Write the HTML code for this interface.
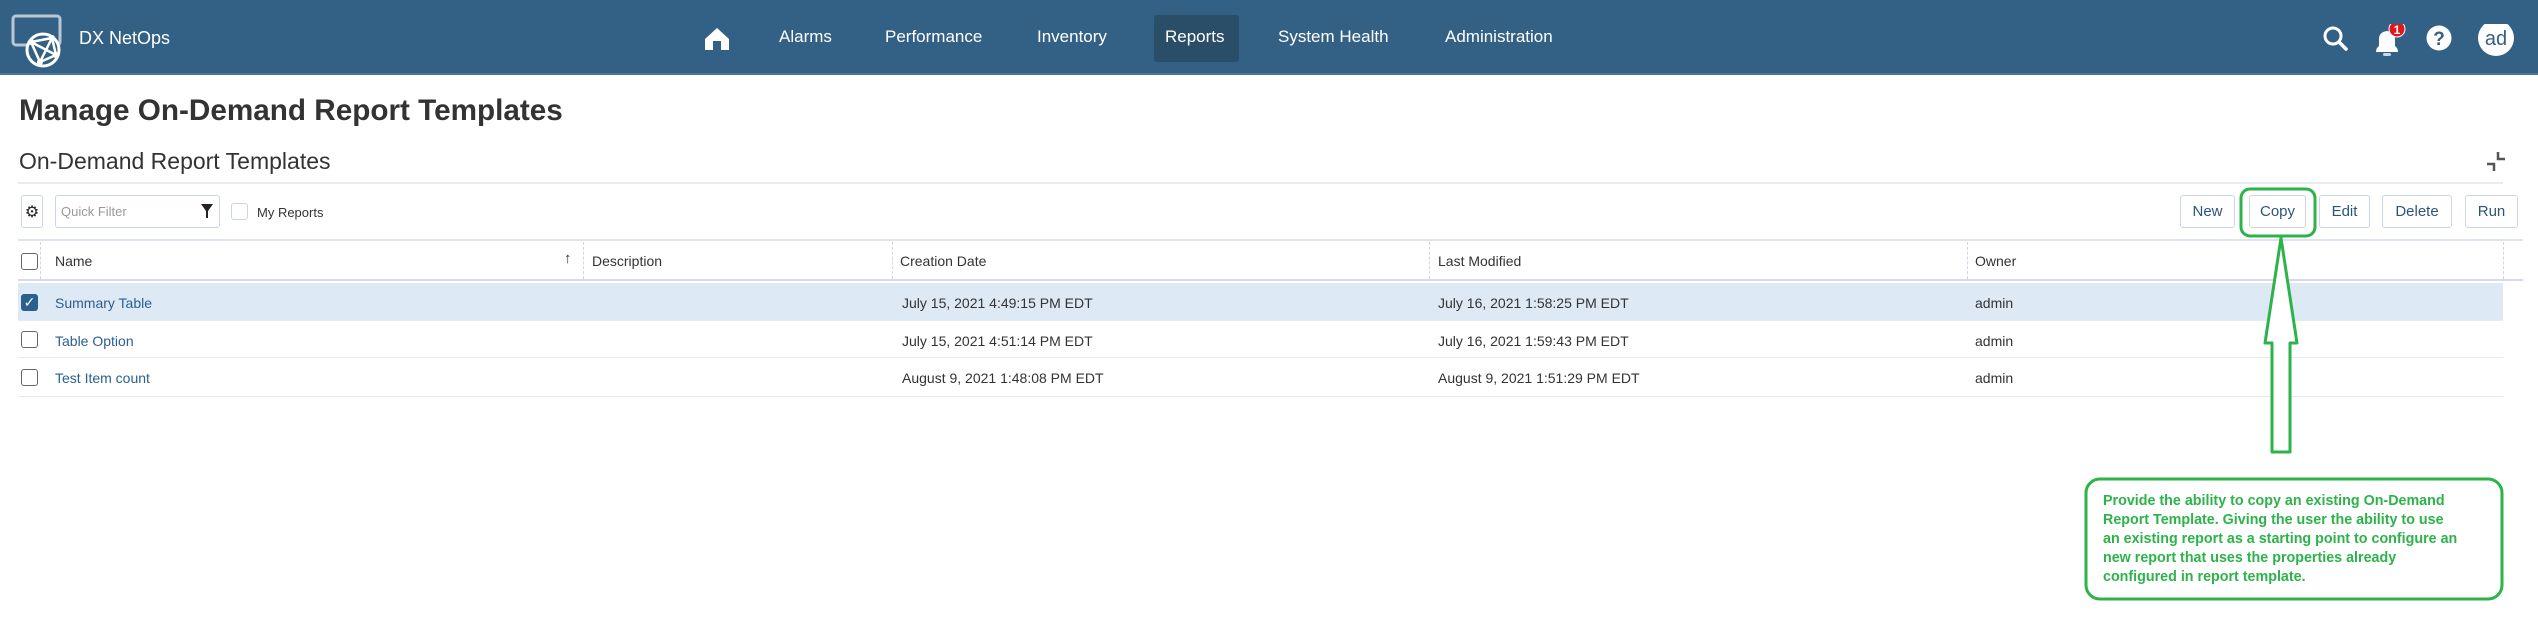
<!DOCTYPE html>
<html><head><meta charset="utf-8"><style>
*{margin:0;padding:0;box-sizing:border-box}
body{width:2538px;height:627px;background:#fff;position:relative;overflow:hidden;font-family:"Liberation Sans",sans-serif;color:#333}
.a{position:absolute;white-space:nowrap}
.nav{left:0;top:0;width:2538px;height:75px;background:#336185;border-bottom:2px solid #4a7594}
.nl{color:#fff;font-size:17px;top:27px}
.btn{position:absolute;top:195px;height:33px;border:1px solid #ccd5e2;border-radius:3px;background:#fff;color:#2c5678;font-size:15px;text-align:center;line-height:31px}
.cb{position:absolute;width:17px;height:17px;border:1.5px solid #666;border-radius:3px;background:#fff}
.t{font-size:14px;color:#333}
.lk{font-size:14px;color:#2b5f8e}
.sep{position:absolute;top:242px;height:37px;border-left:1px dashed #cfd6e4}
.hl{position:absolute;left:18px;width:2485px;height:1px;background:#e6e9ee}
</style></head><body>
<div class="a nav"></div>
<svg class="a" style="left:0;top:0" width="200" height="75">
<rect x="13" y="16" width="47" height="29" rx="3" fill="none" stroke="#b9c6d3" stroke-width="3"/>
<circle cx="43" cy="50" r="16" fill="#336185" stroke="#fff" stroke-width="3"/>
<path d="M31 42 L52 38 L56 55 L40 62 Z M31 42 L56 55 M52 38 L40 62" stroke="#fff" stroke-width="2.5" fill="none"/>
<circle cx="31" cy="42" r="3" fill="#fff"/><circle cx="52" cy="38" r="3" fill="#fff"/><circle cx="56" cy="55" r="3" fill="#fff"/><circle cx="40" cy="62" r="3" fill="#fff"/>
</svg>
<div class="a" style="left:79px;top:28px;color:#fff;font-size:18px">DX NetOps</div>
<svg class="a" style="left:704px;top:27px" width="26" height="24"><path d="M13 1 L25 12 V23 H17 V14 H9 V23 H1 V12 Z" fill="#fff"/></svg>
<div class="a nl" style="left:779px">Alarms</div>
<div class="a nl" style="left:885px">Performance</div>
<div class="a nl" style="left:1037px">Inventory</div>
<div class="a" style="left:1154px;top:15px;width:85px;height:47px;background:#2a4e68;border-radius:3px"></div>
<div class="a nl" style="left:1165px">Reports</div>
<div class="a nl" style="left:1278px">System Health</div>
<div class="a nl" style="left:1445px">Administration</div>
<svg class="a" style="left:2320px;top:24px" width="200" height="34">
<circle cx="13" cy="12" r="8" fill="none" stroke="#fff" stroke-width="3"/><path d="M19 18 L26 25" stroke="#fff" stroke-width="3.5" stroke-linecap="round"/>
<path d="M56 28 Q56 24 59 22 V15 Q59 8 67 7 Q75 8 75 15 V22 Q78 24 78 28 Z" fill="#fff"/><rect x="63" y="29" width="8" height="3" rx="1.5" fill="#cfd8e2"/>
<circle cx="77" cy="5" r="8" fill="#e0181e" stroke="#fff" stroke-width="1"/><text x="77" y="10" font-size="12" font-weight="bold" fill="#fff" text-anchor="middle" font-family="Liberation Sans">1</text>
<circle cx="119" cy="14" r="12.5" fill="#fff"/><text x="119" y="21" font-size="19" font-weight="bold" fill="#336185" text-anchor="middle" font-family="Liberation Sans">?</text>
<circle cx="176" cy="14" r="18" fill="#fff"/><text x="176" y="21" font-size="20" fill="#336185" text-anchor="middle" font-family="Liberation Sans">ad</text>
</svg>
<div class="a" style="left:19px;top:94px;font-size:29.7px;font-weight:bold;color:#333">Manage On-Demand Report Templates</div>
<div class="a" style="left:19px;top:148px;font-size:23px;color:#333">On-Demand Report Templates</div>
<svg class="a" style="left:2485px;top:150px" width="22" height="22"><path d="M2 14 H9 V21 M13 2 V9 H20" stroke="#555" stroke-width="2.5" fill="none"/></svg>
<div class="hl" style="top:182px;height:2px;background:#e8ebf0"></div>
<div class="a" style="left:21px;top:195px;width:22px;height:33px;border:1px solid #ccd5e2;border-radius:3px;text-align:center;line-height:31px;font-size:16px;color:#222;font-family:'DejaVu Sans',sans-serif">⚙</div>
<div class="a" style="left:55px;top:195px;width:165px;height:33px;border:1px solid #ccd5e2;border-radius:3px"></div>
<div class="a" style="left:61px;top:204px;font-size:13px;color:#999">Quick Filter</div>
<svg class="a" style="left:200px;top:203px" width="14" height="16"><path d="M1 1 H13 L8 8 V15 L6 15 V8 Z" fill="#222"/></svg>
<div class="a" style="left:231px;top:203px;width:17px;height:17px;border:1px solid #ccd5e2;border-radius:3px"></div>
<div class="a" style="left:257px;top:205px;font-size:13px;color:#333">My Reports</div>
<div class="btn" style="left:2180px;width:55px">New</div>
<div class="btn" style="left:2249px;width:57px">Copy</div>
<div class="btn" style="left:2319px;width:51px">Edit</div>
<div class="btn" style="left:2382px;width:70px">Delete</div>
<div class="btn" style="left:2465px;width:53px">Run</div>
<div class="hl" style="top:239px;width:2505px;height:2px;background:#dfe3ec"></div>
<div class="cb" style="left:21px;top:253px"></div>
<div class="a t" style="left:55px;top:253px">Name</div>
<div class="a t" style="left:564px;top:250px;font-size:15px">↑</div>
<div class="sep" style="left:40px"></div>
<div class="sep" style="left:583px"></div>
<div class="a t" style="left:592px;top:253px">Description</div>
<div class="sep" style="left:892px"></div>
<div class="a t" style="left:900px;top:253px">Creation Date</div>
<div class="sep" style="left:1429px"></div>
<div class="a t" style="left:1438px;top:253px">Last Modified</div>
<div class="sep" style="left:1967px"></div>
<div class="a t" style="left:1975px;top:253px">Owner</div>
<div class="sep" style="left:2503px"></div>
<div class="hl" style="top:279px;width:2505px;height:2px;background:#d5dbe8"></div>
<div class="a" style="left:18px;top:283px;width:2485px;height:37px;background:#dde9f5"></div>
<div class="a" style="left:21px;top:294px;width:17px;height:17px;border-radius:3px;background:#2b5f8e;color:#fff;font-size:14px;line-height:17px;text-align:center">✓</div>
<div class="a lk" style="left:55px;top:295px">Summary Table</div>
<div class="a t" style="left:902px;top:295px">July 15, 2021 4:49:15 PM EDT</div>
<div class="a t" style="left:1438px;top:295px">July 16, 2021 1:58:25 PM EDT</div>
<div class="a t" style="left:1975px;top:295px">admin</div>
<div class="hl" style="top:320px"></div>
<div class="cb" style="left:21px;top:331px"></div>
<div class="a lk" style="left:55px;top:333px">Table Option</div>
<div class="a t" style="left:902px;top:333px">July 15, 2021 4:51:14 PM EDT</div>
<div class="a t" style="left:1438px;top:333px">July 16, 2021 1:59:43 PM EDT</div>
<div class="a t" style="left:1975px;top:333px">admin</div>
<div class="hl" style="top:357px"></div>
<div class="cb" style="left:21px;top:369px"></div>
<div class="a lk" style="left:55px;top:370px">Test Item count</div>
<div class="a t" style="left:902px;top:370px">August 9, 2021 1:48:08 PM EDT</div>
<div class="a t" style="left:1438px;top:370px">August 9, 2021 1:51:29 PM EDT</div>
<div class="a t" style="left:1975px;top:370px">admin</div>
<div class="hl" style="top:396px"></div>
<svg class="a" style="left:0;top:0" width="2538" height="627">
<rect x="2241" y="189" width="74" height="47" rx="9" fill="none" stroke="#2db34a" stroke-width="3"/>
<path d="M2281 238 L2297 343 L2290 343 L2290 452 L2272 452 L2272 343 L2265 343 Z" fill="#fff" stroke="#2db34a" stroke-width="3" stroke-linejoin="round"/>
<rect x="2086" y="479" width="416" height="120" rx="14" fill="#fff" stroke="#2db34a" stroke-width="3"/>
</svg>
<div class="a" style="left:2103px;top:492px;font-size:14.3px;line-height:19px;font-weight:bold;color:#2db34a;white-space:normal;width:398px">Provide the ability to copy an existing On-Demand<br>Report Template. Giving the user the ability to use<br>an existing report as a starting point to configure an<br>new report that uses the properties already<br>configured in report template.</div>
</body></html>
